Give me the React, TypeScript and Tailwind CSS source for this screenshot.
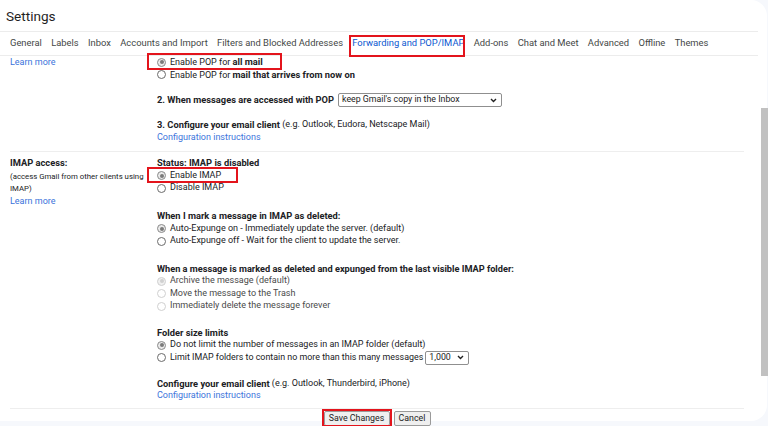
import React from "react";

const L = "h-[12.5px] flex items-center whitespace-nowrap shrink-0";
const B = "font-bold text-[9.3px]";

function Radio({ checked, disabled }: { checked?: boolean; disabled?: boolean }) {
  const border = disabled ? "border-[#d0d0d0]" : checked ? "border-[#8a8a8a]" : "border-[#6b6b6b]";
  const bg = checked ? (disabled ? "bg-[#f0f0f0]" : "bg-[#eaeaea]") : "bg-white";
  return (
    <span className={`w-[9px] h-[9px] rounded-full border ${border} ${bg} flex items-center justify-center shrink-0`}>
      {checked && (
        <span className={`w-[4px] h-[4px] rounded-full ${disabled ? "bg-[#d0d0d0]" : "bg-[#7a7a7a]"}`} />
      )}
    </span>
  );
}

function Opt({
  checked,
  disabled,
  children,
}: {
  checked?: boolean;
  disabled?: boolean;
  children: React.ReactNode;
}) {
  return (
    <div className={`${L} gap-[4px]`}>
      <Radio checked={checked} disabled={disabled} />
      <span className={disabled ? "text-[#4a4a4a]" : ""}>{children}</span>
    </div>
  );
}

function Chevron() {
  return (
    <svg width="7" height="5" viewBox="0 0 7 5" className="shrink-0">
      <path d="M1 1 L3.5 3.5 L6 1" fill="none" stroke="#222" strokeWidth="1.4" />
    </svg>
  );
}

function Select({ label, width }: { label: string; width: string }) {
  return (
    <span
      className={`${width} h-[14px] border border-[#8f8f8f] rounded-[2px] bg-white flex items-center justify-between pl-[3px] pr-[4px] text-[8.8px] font-normal text-[#222] shrink-0`}
    >
      <span>{label}</span>
      <Chevron />
    </span>
  );
}

const tabs = [
  "General",
  "Labels",
  "Inbox",
  "Accounts and Import",
  "Filters and Blocked Addresses",
  "Forwarding and POP/IMAP",
  "Add-ons",
  "Chat and Meet",
  "Advanced",
  "Offline",
  "Themes",
];

export default function App() {
  return (
    <div className="w-[768px] h-[426px] bg-[#f6f8fc] relative overflow-hidden font-[family-name:Roboto,Arial,sans-serif] text-[#202124]">
      <div className="w-[767px] h-[421px] bg-white rounded-r-[16px]">
        {/* Title */}
        <div className="h-[31px] flex items-center pl-[6px] pt-[2px] text-[13.6px] text-[#1f1f1f]">
          Settings
        </div>
        <div className="w-[758px] h-px bg-[#ececec]" />
        {/* Tabs */}
        <div className="h-[23px] flex items-center pl-[10px] gap-[9.3px] text-[9.4px] text-[#444746] whitespace-nowrap">
          {tabs.map((t) => (
            <span key={t} className={t === "Forwarding and POP/IMAP" ? "text-[#0b57d0]" : ""}>
              {t}
            </span>
          ))}
        </div>
        <div className="w-[758px] h-px bg-[#ececec]" />

        {/* Content */}
        <div className="flex flex-col pl-[10px] text-[9px] w-[744px]">
          {/* POP section (scrolled) */}
          <div className="flex">
            <div className="w-[147px]">
              <div className={`${L} text-[#3b73db]`}>Learn more</div>
            </div>
            <div className="flex flex-col">
              <Opt checked>
                Enable POP for <b className={B}>all mail</b>
              </Opt>
              <Opt>
                Enable POP for <b className={B}>mail that arrives from now on</b>
              </Opt>
              <div className={`${L} mt-[12.75px] gap-[4px]`}>
                <b className={B}>2. When messages are accessed with POP</b>
                <Select label="keep Gmail's copy in the Inbox" width="w-[164px]" />
              </div>
              <div className={`${L} mt-[12.5px]`}>
                <b className={B}>3. Configure your email client</b>&nbsp;(e.g. Outlook, Eudora, Netscape Mail)
              </div>
              <div className={`${L} text-[#3b73db]`}>Configuration instructions</div>
            </div>
          </div>
          <div className="h-px bg-[#eeeeee] mt-[7px] shrink-0" />

          {/* IMAP section */}
          <div className="flex pt-[5px]">
            <div className="w-[147px] flex flex-col">
              <div className={`${L} ${B}`}>IMAP access:</div>
              <div className="h-[12.5px] mt-[1.5px] flex items-center text-[7.8px] whitespace-nowrap">
                (access Gmail from other clients using
              </div>
              <div className="h-[12px] flex items-center text-[7.8px]">IMAP)</div>
              <div className={`${L} mt-[0.5px] text-[#3b73db]`}>Learn more</div>
            </div>
            <div className="flex flex-col">
              <div className={`${L} ${B}`}>Status: IMAP is disabled</div>
              <Opt checked>Enable IMAP</Opt>
              <Opt>Disable IMAP</Opt>

              <div className={`${L} mt-[15.5px] ${B}`}>When I mark a message in IMAP as deleted:</div>
              <Opt checked>Auto-Expunge on - Immediately update the server. (default)</Opt>
              <Opt>Auto-Expunge off - Wait for the client to update the server.</Opt>

              <div className={`${L} mt-[15px] font-bold text-[9.2px]`}>
                When a message is marked as deleted and expunged from the last visible IMAP folder:
              </div>
              <Opt checked disabled>
                Archive the message (default)
              </Opt>
              <Opt disabled>Move the message to the Trash</Opt>
              <Opt disabled>Immediately delete the message forever</Opt>

              <div className={`${L} mt-[14px] ${B}`}>Folder size limits</div>
              <Opt checked>Do not limit the number of messages in an IMAP folder (default)</Opt>
              <div className={`${L} gap-[4px]`}>
                <Radio />
                <span className="text-[8.9px]">Limit IMAP folders to contain no more than this many messages</span>
                <span className="-ml-[2px]">
                  <Select label="1,000" width="w-[44px]" />
                </span>
              </div>

              <div className={`${L} mt-[13.5px]`}>
                <b className={B}>Configure your email client</b>&nbsp;(e.g. Outlook, Thunderbird, iPhone)
              </div>
              <div className={`${L} text-[#3b73db]`}>Configuration instructions</div>
            </div>
          </div>
          <div className="h-px bg-[#eeeeee] mt-[6px] shrink-0" />

          {/* Buttons */}
          <div className="flex justify-center gap-[4px] mt-[2px] shrink-0">
            <button className="h-[15px] w-[66px] border border-[#9a9a9a] bg-[#efefef] rounded-[2px] text-[8.8px] text-[#222] flex items-center justify-center">
              Save Changes
            </button>
            <button className="h-[15px] w-[37px] border border-[#9a9a9a] bg-[#efefef] rounded-[2px] text-[8.8px] text-[#222] flex items-center justify-center">
              Cancel
            </button>
          </div>
        </div>
      </div>

      {/* Scrollbar */}
      <div className="absolute left-[761px] top-[108px] w-[7px] h-[268px] bg-[#c1c1c1]" />

      {/* Red annotation boxes */}
      <div className="absolute left-[349px] top-[35px] w-[116px] h-[22px] border-2 border-[#e3141c]" />
      <div className="absolute left-[147px] top-[53px] w-[135px] h-[17px] border-2 border-[#e3141c]" />
      <div className="absolute left-[147px] top-[167px] w-[91px] h-[16px] border-2 border-[#e3141c]" />
      <div className="absolute left-[322px] top-[409px] w-[70px] h-[18px] border-2 border-[#e3141c]" />
    </div>
  );
}
